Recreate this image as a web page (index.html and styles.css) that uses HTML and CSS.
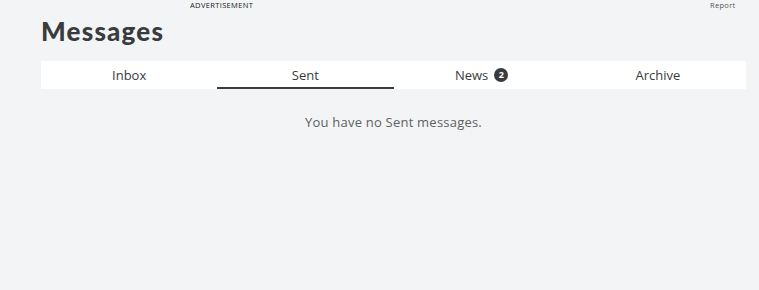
FILE: index.html
```html
<!DOCTYPE html>
<html>
<head>
<meta charset="utf-8">
<link rel="stylesheet" href="styles.css">
</head>
<body>
<div class="page">
  <div class="adbar">
    <span class="ad-label">ADVERTISEMENT</span>
    <span class="report">Report</span>
  </div>
  <div class="content">
    <h1 class="title">Messages</h1>
    <ul class="tabs">
      <li class="tab">Inbox</li>
      <li class="tab active">Sent</li>
      <li class="tab">News <span class="badge">2</span></li>
      <li class="tab">Archive</li>
    </ul>
    <p class="empty">You have no Sent messages.</p>
  </div>
</div>
</body>
</html>
```
FILE: styles.css
```css
html, body {
  margin: 0;
  padding: 0;
  background: #f2f4f5;
  font-family: "Open Sans", "Noto Sans", sans-serif;
  color: #393b3d;
}
.page {
  width: 759px;
  height: 290px;
  overflow: hidden;
}
.adbar {
  position: relative;
  height: 10px;
  font-size: 7.5px;
  line-height: 10px;
}
.ad-label {
  position: absolute;
  left: 190px;
  top: 0;
  color: #222;
  letter-spacing: 0.35px;
}
.report {
  position: absolute;
  left: 710px;
  top: 0;
  color: #555;
  letter-spacing: 0.3px;
}
.content {
  margin: 0 13px 0 41px;
}
.title {
  margin: 5px 0 0 0;
  font-family: "Lato", sans-serif;
  font-size: 26px;
  line-height: 32px;
  font-weight: 900;
  letter-spacing: 1.2px;
  color: #393b3d;
}
.tabs {
  list-style: none;
  margin: 14px 0 0 0;
  padding: 0;
  display: flex;
  background: #fff;
  height: 28px;
}
.tab {
  flex: 1;
  display: flex;
  align-items: center;
  justify-content: center;
  gap: 6px;
  font-size: 13px;
  color: #393b3d;
  box-sizing: border-box;
  padding-bottom: 1px;
}
.tab.active {
  border-bottom: 2px solid #393b3d;
  padding-top: 1px;
  padding-bottom: 0;
}
.badge {
  display: inline-flex;
  align-items: center;
  justify-content: center;
  width: 14px;
  height: 14px;
  border-radius: 50%;
  background: #393b3d;
  color: #fff;
  font-size: 9px;
  font-weight: 700;
  line-height: 1;
}
.empty {
  margin: 24px 0 0 0;
  text-align: center;
  font-size: 13px;
  letter-spacing: 0.22px;
  color: #606162;
}
```
